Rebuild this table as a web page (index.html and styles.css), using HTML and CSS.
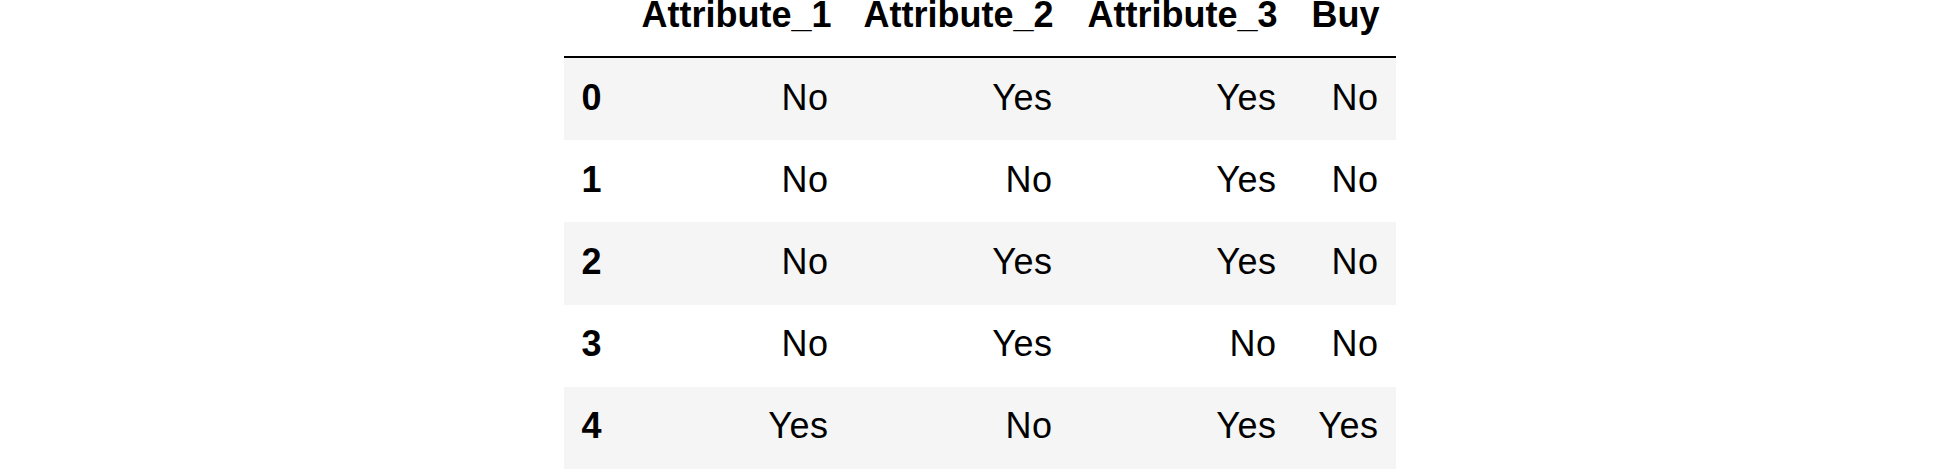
FILE: index.html
```html
<!DOCTYPE html>
<html>
<head>
<meta charset="utf-8">
<link rel="stylesheet" href="styles.css">
</head>
<body>
<table class="df">
  <colgroup>
    <col class="c-idx">
    <col class="c-a1">
    <col class="c-a2">
    <col class="c-a3">
    <col class="c-buy">
  </colgroup>
  <thead>
    <tr>
      <th class="head"></th>
      <th class="head">Attribute_1</th>
      <th class="head">Attribute_2</th>
      <th class="head">Attribute_3</th>
      <th class="head">Buy</th>
    </tr>
  </thead>
  <tbody>
    <tr class="odd"><th class="idx">0</th><td>No</td><td>Yes</td><td>Yes</td><td>No</td></tr>
    <tr><th class="idx">1</th><td>No</td><td>No</td><td>Yes</td><td>No</td></tr>
    <tr class="odd"><th class="idx">2</th><td>No</td><td>Yes</td><td>Yes</td><td>No</td></tr>
    <tr><th class="idx">3</th><td>No</td><td>Yes</td><td>No</td><td>No</td></tr>
    <tr class="odd"><th class="idx">4</th><td>Yes</td><td>No</td><td>Yes</td><td>Yes</td></tr>
  </tbody>
</table>
</body>
</html>
```

FILE: styles.css
```css
html, body {
  margin: 0;
  padding: 0;
  background: #ffffff;
}

body {
  font-family: "Liberation Sans", Arial, Helvetica, sans-serif;
  color: #000000;
  overflow: hidden;
}

.df {
  margin: 0 auto;
  width: 832px;
  table-layout: fixed;
  border-collapse: separate;
  border-spacing: 0;
  font-size: 36px;
}

.c-idx { width: 60px; }
.c-a1 { width: 222px; }
.c-a2 { width: 224px; }
.c-a3 { width: 224px; }
.c-buy { width: 102px; }

.head {
  font-weight: bold;
  text-align: right;
  line-height: 29px;
  padding: 0 17.5px 27px 17.5px;
  border-bottom: 2px solid #000000;
  vertical-align: bottom;
  white-space: nowrap;
}

.df td,
.idx {
  line-height: 40px;
  padding: 19.6px 17.5px 22.6px 17.5px;
  vertical-align: middle;
  white-space: nowrap;
}

.df td {
  text-align: right;
  font-weight: normal;
  letter-spacing: 0.5px;
}

.idx {
  text-align: left;
  font-weight: bold;
}

.odd {
  background: #f5f5f5;
}
```
